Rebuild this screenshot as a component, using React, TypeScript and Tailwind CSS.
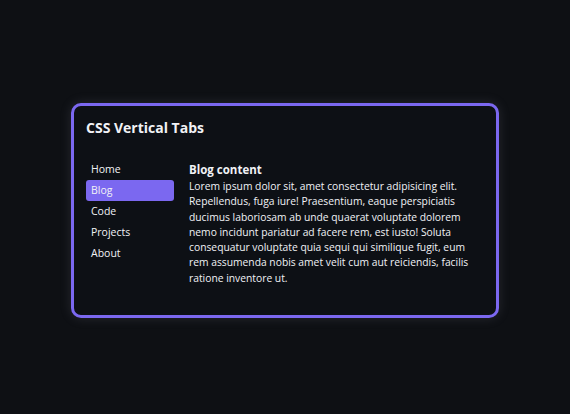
const tabs = ["Home", "Blog", "Code", "Projects", "About"];

const lines = [
  "Lorem ipsum dolor sit, amet consectetur adipisicing elit.",
  "Repellendus, fuga iure! Praesentium, eaque perspiciatis",
  "ducimus laboriosam ab unde quaerat voluptate dolorem",
  "nemo incidunt pariatur ad facere rem, est iusto! Soluta",
  "consequatur voluptate quia sequi qui similique fugit, eum",
  "rem assumenda nobis amet velit cum aut reiciendis, facilis",
  "ratione inventore ut.",
];

export default function App() {
  const active = "Blog";

  return (
    <div className="flex min-h-screen items-center justify-center bg-[#0e1014] pt-[7px] font-['Open_Sans',sans-serif] text-[#f1f2f5]">
      <div className="w-[428px] rounded-[10px] border-[3px] border-[#7b68f0] bg-[#0d1015] px-3 pb-[29px] pt-[10px] shadow-[0_0_12px_rgba(150,150,170,0.18)]">
        <h1 className="text-[14px] font-bold leading-[24px]">CSS Vertical Tabs</h1>

        <div className="mt-[19px] flex">
          <ul className="w-[88px] shrink-0">
            {tabs.map((tab) => (
              <li
                key={tab}
                className={
                  tab === active
                    ? "flex h-[21px] items-center rounded-[3px] bg-[#7b68f0] px-[5px] text-[10.5px] font-medium"
                    : "flex h-[21px] items-center rounded-[3px] px-[5px] text-[10.5px] font-medium"
                }
              >
                {tab}
              </li>
            ))}
          </ul>

          <div className="ml-[15px] flex-1 pt-[2px]">
            <h2 className="text-[11.5px] font-bold leading-[18px]">Blog content</h2>
            <p className="text-[10.3px] font-medium leading-[15.2px]">
              {lines.map((line) => (
                <span key={line} className="block whitespace-nowrap">
                  {line}
                </span>
              ))}
            </p>
          </div>
        </div>
      </div>
    </div>
  );
}
